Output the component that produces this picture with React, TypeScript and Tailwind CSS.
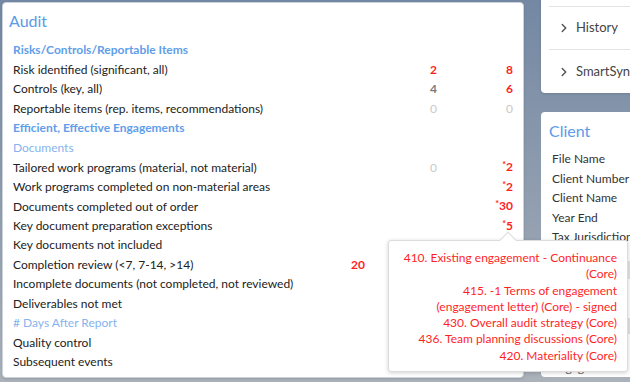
import { ChevronRight } from 'lucide-react';

type Cell = { v: string; tone: 'red' | 'gray' | 'light' };
type Row = { label: string; kind: 'head' | 'sub' | 'item'; cells?: (Cell | null)[] };

const red = (v: string): Cell => ({ v, tone: 'red' });
const gray = (v: string): Cell => ({ v, tone: 'gray' });
const light = (v: string): Cell => ({ v, tone: 'light' });

const rows: Row[] = [
  { label: 'Risks/Controls/Reportable Items', kind: 'head' },
  { label: 'Risk identified (significant, all)', kind: 'item', cells: [null, red('2'), red('8')] },
  { label: 'Controls (key, all)', kind: 'item', cells: [null, gray('4'), red('6')] },
  { label: 'Reportable items (rep. items, recommendations)', kind: 'item', cells: [null, light('0'), light('0')] },
  { label: 'Efficient, Effective Engagements', kind: 'head' },
  { label: 'Documents', kind: 'sub' },
  { label: 'Tailored work programs (material, not material)', kind: 'item', cells: [null, light('0'), red('*2')] },
  { label: 'Work programs completed on non-material areas', kind: 'item', cells: [null, null, red('*2')] },
  { label: 'Documents completed out of order', kind: 'item', cells: [null, null, red('*30')] },
  { label: 'Key document preparation exceptions', kind: 'item', cells: [null, null, red('*5')] },
  { label: 'Key documents not included', kind: 'item' },
  { label: 'Completion review (<7, 7-14, >14)', kind: 'item', cells: [red('20'), null, null] },
  { label: 'Incomplete documents (not completed, not reviewed)', kind: 'item' },
  { label: 'Deliverables not met', kind: 'item' },
  { label: '# Days After Report', kind: 'sub' },
  { label: 'Quality control', kind: 'item' },
  { label: 'Subsequent events', kind: 'item' },
];

const toneClass = {
  red: 'text-[#ff1f1f] font-bold',
  gray: 'text-[#7a7a7a] font-bold',
  light: 'text-[#c9c9c9]',
};

function Value({ cell }: { cell: Cell | null | undefined }) {
  if (!cell) return <span />;
  const star = cell.v.startsWith('*');
  return (
    <span className={`text-right ${toneClass[cell.tone]}`}>
      {star && <span className="relative -top-[3px] text-[9px]">*</span>}
      {star ? cell.v.slice(1) : cell.v}
    </span>
  );
}

const tooltipLines = [
  '410. Existing engagement - Continuance',
  '(Core)',
  '415. -1 Terms of engagement',
  '(engagement letter) (Core) - signed',
  '430. Overall audit strategy (Core)',
  '436. Team planning discussions (Core)',
  '420. Materiality (Core)',
];

export default function App() {
  return (
    <div
      className="relative h-[382px] w-[630px] overflow-hidden bg-gradient-to-b from-[#7488a3] to-[#abb2ba] text-[12px] text-[#222]"
      style={{ fontFamily: 'Lato, "Noto Sans", sans-serif' }}
    >
      <div className="flex gap-[17px] pl-[2px] pt-[2px]">
        {/* Audit card */}
        <div className="h-[376px] w-[522px] shrink-0 rounded-[4px] border border-[#cdd3da] bg-white pr-[10px] pl-[6px] pt-[6px] shadow-sm">
          <h2 className="text-[16px] leading-[24px] text-[#5b9be8]">Audit</h2>
          <div className="mt-[7px] pl-[4px]">
            {rows.map((r) => (
              <div key={r.label} className="grid h-[19.5px] grid-cols-[1fr_60px_72px_76px] items-center leading-[19.5px]">
                <span
                  className={
                    r.kind === 'head'
                      ? 'font-bold text-[#5f9ee9]'
                      : r.kind === 'sub'
                        ? 'text-[#86b4ee]'
                        : ''
                  }
                >
                  {r.label}
                </span>
                <Value cell={r.cells?.[0]} />
                <Value cell={r.cells?.[1]} />
                <Value cell={r.cells?.[2]} />
              </div>
            ))}
          </div>
        </div>

        {/* Right column */}
        <div className="flex w-[200px] shrink-0 flex-col gap-[19px]">
          <div className="-mt-[38px] rounded-[4px] bg-white px-[8px] shadow-sm">
            <div className="h-[43px] border-b border-[#e3e3e3]" />
            {['History', 'SmartSync'].map((t, i) => (
              <div
                key={t}
                className={`flex h-[43px] items-center gap-[5px] pl-[8px] text-[13px] text-[#444] ${i === 0 ? 'border-b border-[#e3e3e3]' : ''}`}
              >
                <ChevronRight className="size-[14px] text-[#555]" strokeWidth={2.5} />
                {t}
              </div>
            ))}
          </div>
          <div className="rounded-[4px] bg-white px-[8px] pt-[7px]">
            <h2 className="text-[16px] leading-[24px] text-[#5b9be8]">Client</h2>
            <div className="mt-[6px] pl-[3px] leading-[19.5px] text-[#333]">
              <div>File Name</div>
              <div>Client Number</div>
              <div>Client Name</div>
              <div>Year End</div>
              <div>Tax Jurisdiction</div>
              <div className="mt-[14px] h-[18px] bg-[#e2e2e2]" />
              <div className="h-[39px]" />
              <div className="h-[16px] bg-[#e2e2e2]" />
              <div className="mt-[24px] text-[#666]">Engagement</div>
            </div>
          </div>
        </div>
      </div>

      {/* Tooltip */}
      <div className="absolute left-[388px] top-[240px] w-[240px] rounded-[3px] border border-[#dcdcdc] bg-white pr-[10px] pt-[9px] pb-[7px] text-right text-[12px] leading-[16.3px] text-[#ff1f1f] shadow-[0_1px_4px_rgba(0,0,0,0.18)]">
        <div className="absolute -top-[7px] left-[113px] size-[12px] rotate-45 border-l border-t border-[#dcdcdc] bg-white" />
        {tooltipLines.map((l) => (
          <div key={l}>{l}</div>
        ))}
      </div>
    </div>
  );
}
